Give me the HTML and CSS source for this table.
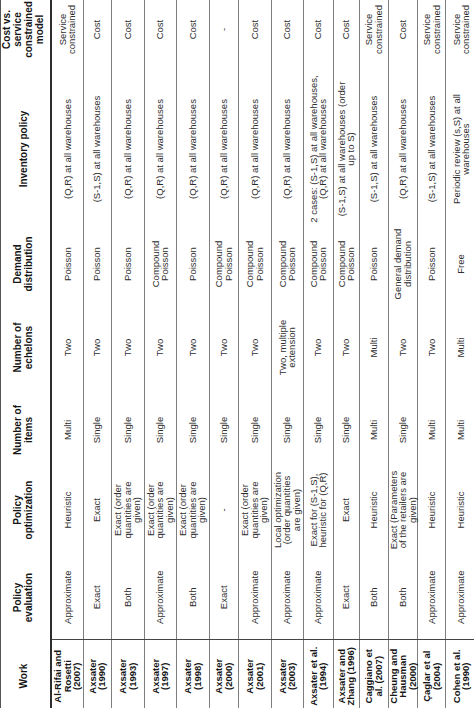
FILE: index.html
```html
<!DOCTYPE html>
<html>
<head>
<meta charset="utf-8">
<link rel="stylesheet" href="styles.css">
</head>
<body>
<div class="page">
<table class="tbl">
<colgroup>
<col class="c-work"><col class="c-eval"><col class="c-opt"><col class="c-items"><col class="c-ech"><col class="c-dem"><col class="c-inv"><col class="c-cost">
</colgroup>
<thead>
<tr class="head">
<th>Work</th>
<th>Policy<br>evaluation</th>
<th>Policy<br>optimization</th>
<th>Number of<br>items</th>
<th>Number of<br>echelons</th>
<th>Demand<br>distribution</th>
<th>Inventory policy</th>
<th>Cost vs.<br>service<br>constrained<br>model</th>
</tr>
</thead>
<tbody>
<tr class="h32"><td class="work">Al-Rifai and<br>Rosetti<br>(2007)</td><td>Approximate</td><td>Heuristic</td><td>Multi</td><td>Two</td><td>Poisson</td><td>(Q,R) at all warehouses</td><td>Service<br>constrained</td></tr>
<tr class="h28"><td class="work">Axsater<br>(1990)</td><td>Exact</td><td>Exact</td><td>Single</td><td>Two</td><td>Poisson</td><td>(S-1,S) at all warehouses</td><td>Cost</td></tr>
<tr class="h33"><td class="work">Axsater<br>(1993)</td><td>Both</td><td>Exact (order<br>quantities are<br>given)</td><td>Single</td><td>Two</td><td>Poisson</td><td>(Q,R) at all warehouses</td><td>Cost</td></tr>
<tr class="h32"><td class="work">Axsater<br>(1997)</td><td>Approximate</td><td>Exact (order<br>quantities are<br>given)</td><td>Single</td><td>Two</td><td>Compound<br>Poisson</td><td>(Q,R) at all warehouses</td><td>Cost</td></tr>
<tr class="h33"><td class="work">Axsater<br>(1998)</td><td>Both</td><td>Exact (order<br>quantities are<br>given)</td><td>Single</td><td>Two</td><td>Poisson</td><td>(Q,R) at all warehouses</td><td>Cost</td></tr>
<tr class="h29"><td class="work">Axsater<br>(2000)</td><td>Exact</td><td>-</td><td>Single</td><td>Two</td><td>Compound<br>Poisson</td><td>(Q,R) at all warehouses</td><td>-</td></tr>
<tr class="h33"><td class="work">Axsater<br>(2001)</td><td>Approximate</td><td>Exact (order<br>quantities are<br>given)</td><td>Single</td><td>Two</td><td>Compound<br>Poisson</td><td>(Q,R) at all warehouses</td><td>Cost</td></tr>
<tr class="h32"><td class="work">Axsater<br>(2003)</td><td>Approximate</td><td>Local optimization<br>(order quantities<br>are given)</td><td>Single</td><td>Two, multiple<br>extension</td><td>Compound<br>Poisson</td><td>(Q,R) at all warehouses</td><td>Cost</td></tr>
<tr class="h30"><td class="work">Axsater et al.<br>(1994)</td><td>Approximate</td><td>Exact for (S-1,S),<br>heuristic for (Q,R)</td><td>Single</td><td>Two</td><td>Compound<br>Poisson</td><td>2 cases: (S-1,S) at all warehouses,<br>(Q,R) at all warehouses</td><td>Cost</td></tr>
<tr class="h26"><td class="work">Axsater and<br>Zhang (1996)</td><td>Exact</td><td>Exact</td><td>Single</td><td>Two</td><td>Compound<br>Poisson</td><td>(S-1,S) at all warehouses (order<br>up to S)</td><td>Cost</td></tr>
<tr class="h29"><td class="work">Caggiano et<br>al. (2007)</td><td>Both</td><td>Heuristic</td><td>Multi</td><td>Multi</td><td>Poisson</td><td>(S-1,S) at all warehouses</td><td>Service<br>constrained</td></tr>
<tr class="h28"><td class="work">Cheung and<br>Hausman<br>(2000)</td><td>Both</td><td>Exact (Parameters<br>of the retailers are<br>given)</td><td>Single</td><td>Two</td><td>General demand<br>distribution</td><td>(Q,R) at all warehouses</td><td>Cost</td></tr>
<tr class="h28"><td class="work">Çaglar et al<br>(2004)</td><td>Approximate</td><td>Heuristic</td><td>Multi</td><td>Two</td><td>Poisson</td><td>(S-1,S) at all warehouses</td><td>Service<br>constrained</td></tr>
<tr class="h31"><td class="work">Cohen et al.<br>(1990)</td><td>Approximate</td><td>Heuristic</td><td>Multi</td><td>Multi</td><td>Free</td><td>Periodic review (s,S) at all<br>warehouses</td><td>Service<br>constrained</td></tr>
</tbody>
</table>
</div>
</body>
</html>
```

FILE: styles.css
```css
html, body {
  margin: 0;
  padding: 0;
  background: #ffffff;
}

.page {
  width: 474px;
  height: 708px;
  overflow: hidden;
  background: #ffffff;
}

.tbl {
  width: 723px;
  height: 474px;
  border-collapse: collapse;
  table-layout: fixed;
  transform-origin: 0 0;
  transform: translateY(712px) rotate(-90deg);
  font-family: "Liberation Sans", Arial, sans-serif;
  font-size: 9.5px;
  line-height: 9.5px;
  color: #2e2e2e;
}

.c-work { width: 72px; }
.c-eval { width: 85px; }
.c-opt { width: 90px; }
.c-items { width: 70px; }
.c-ech { width: 95px; }
.c-dem { width: 72px; }
.c-inv { width: 158px; }
.c-cost { width: 81px; }

.head {
  height: 50px;
}

.head th {
  font-size: 10px;
  line-height: 11px;
  font-weight: bold;
  color: #151515;
  text-align: center;
  vertical-align: middle;
  padding: 0 0 5px 0;
  white-space: nowrap;
  border-top: 1px solid #555555;
  border-bottom: 2px solid #2e2e2e;
}

.tbl td {
  text-align: center;
  vertical-align: middle;
  padding: 0;
  white-space: nowrap;
  border-top: 1px solid #7e7e7e;
}

.tbl tbody tr:last-child td {
  border-bottom: 1px solid #666666;
}

.tbl td.work {
  font-weight: bold;
  color: #161616;
  border-right: 1px solid #444444;
}

.h26 { height: 26px; }
.h28 { height: 28px; }
.h29 { height: 29px; }
.h30 { height: 30px; }
.h31 { height: 31px; }
.h32 { height: 32px; }
.h33 { height: 33px; }
```
